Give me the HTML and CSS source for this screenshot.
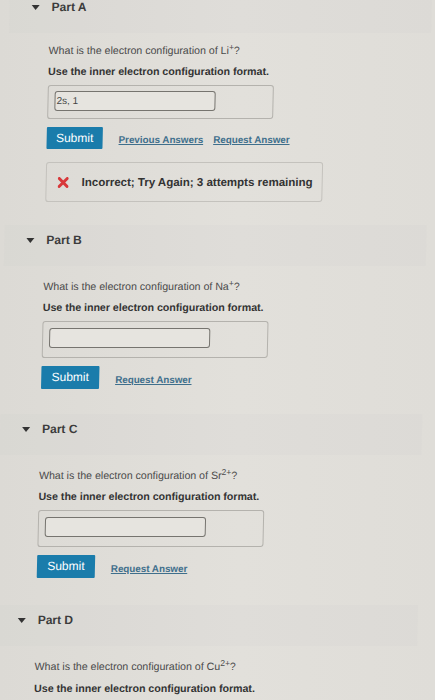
FILE: index.html
```html
<!DOCTYPE html>
<html>
<head>
<meta charset="utf-8">
<link rel="stylesheet" href="styles.css">
</head>
<body>
<div class="page">
  <section class="part part-a">
    <div class="part-head"><span class="caret"></span><span class="part-title">Part A</span></div>
    <div class="part-body">
      <p class="q">What is the electron configuration of Li<sup>+</sup>?</p>
      <p class="instr">Use the inner electron configuration format.</p>
      <div class="answer-box"><div class="input">2s, 1</div></div>
      <div class="actions">
        <span class="btn">Submit</span>
        <a class="link" href="#">Previous Answers</a>
        <a class="link" href="#">Request Answer</a>
      </div>
      <div class="feedback">
        <svg class="x" width="11" height="11" viewBox="0 0 11 11"><path d="M1.5 1.5 L9.5 9.5 M9.5 1.5 L1.5 9.5" stroke="#d8383a" stroke-width="3" stroke-linecap="round"/></svg>
        <span>Incorrect; Try Again; 3 attempts remaining</span>
      </div>
    </div>
  </section>
  <section class="part">
    <div class="part-head"><span class="caret"></span><span class="part-title">Part B</span></div>
    <div class="part-body">
      <p class="q">What is the electron configuration of Na<sup>+</sup>?</p>
      <p class="instr">Use the inner electron configuration format.</p>
      <div class="answer-box"><div class="input"></div></div>
      <div class="actions">
        <span class="btn">Submit</span>
        <a class="link" href="#">Request Answer</a>
      </div>
    </div>
  </section>
  <section class="part">
    <div class="part-head"><span class="caret"></span><span class="part-title">Part C</span></div>
    <div class="part-body">
      <p class="q">What is the electron configuration of Sr<sup>2+</sup>?</p>
      <p class="instr">Use the inner electron configuration format.</p>
      <div class="answer-box"><div class="input"></div></div>
      <div class="actions">
        <span class="btn">Submit</span>
        <a class="link" href="#">Request Answer</a>
      </div>
    </div>
  </section>
  <section class="part part-d">
    <div class="part-head"><span class="caret"></span><span class="part-title">Part D</span></div>
    <div class="part-body">
      <p class="q">What is the electron configuration of Cu<sup>2+</sup>?</p>
      <p class="instr">Use the inner electron configuration format.</p>
    </div>
  </section>
</div>
</body>
</html>
```
FILE: styles.css
```css
html, body {
  margin: 0;
  padding: 0;
  overflow: hidden;
}
body {
  font-family: "Liberation Sans", Arial, sans-serif;
  color: #3a3a3a;
  background: linear-gradient(90deg, #dcdad5 0%, #e2e0db 55%, #dfddd8 100%);
  height: 700px;
}
.page {
  transform: skewX(-1.3deg);
  transform-origin: 0 0;
  margin-top: -8px;
}
.part-head {
  height: 41px;
  margin: 0 3px 0 10px;
  background: rgba(196, 196, 196, 0.11);
  display: flex;
  align-items: flex-start;
  padding-top: 8px;
  box-sizing: border-box;
}
.caret {
  width: 0;
  height: 0;
  border-left: 4px solid transparent;
  border-right: 4px solid transparent;
  border-top: 5px solid #333;
  margin: 5px 0 0 22px;
}
.part-title {
  font-size: 12px;
  font-weight: bold;
  line-height: 14px;
  color: #3c3c3c;
  margin-left: 12px;
}
.part-body {
  padding: 13px 0 25px 50px;
}
.part-a .part-body {
  padding-top: 10px;
  padding-bottom: 23px;
}
.part-d {
  margin-top: 2px;
}
.part-d .instr {
  margin-top: 8px;
}
.q {
  margin: 0;
  font-size: 10.6px;
  line-height: 14px;
  color: #4a4a4a;
}
.q sup {
  font-size: 8.5px;
  line-height: 0;
  vertical-align: 4px;
}
.instr {
  margin: 7px 0 0;
  font-size: 10.6px;
  line-height: 14px;
  font-weight: bold;
  color: #333;
}
.answer-box {
  margin-top: 7px;
  width: 226px;
  height: 37px;
  box-sizing: border-box;
  border: 1px solid #b4b2ad;
  border-radius: 3px;
  padding: 6px 0 0 6px;
}
.part-a .answer-box {
  height: 34px;
  padding-top: 5px;
}
.input {
  width: 161px;
  height: 20px;
  box-sizing: border-box;
  border: 1px solid #76746f;
  border-radius: 3px;
  background: #e6e4df;
  font-size: 10px;
  line-height: 18px;
  padding-left: 1px;
  color: #444;
}
.actions {
  margin-top: 8px;
  display: flex;
  align-items: center;
  gap: 16px;
}
.btn {
  width: 58px;
  height: 23px;
  background: #1a7cab;
  color: #fff;
  font-size: 12px;
  line-height: 23px;
  text-align: center;
  border-radius: 1px;
}
.part-a .btn {
  width: 56px;
  height: 22px;
  line-height: 22px;
}
.actions .link + .link {
  margin-left: -6px;
}
.link {
  font-size: 9.8px;
  font-weight: bold;
  color: #3f6f8c;
  text-decoration: underline;
  margin-top: 3px;
}
.feedback {
  margin-top: 13px;
  width: 277px;
  height: 40px;
  box-sizing: border-box;
  border: 1px solid #c4c2bd;
  border-radius: 3px;
  display: flex;
  align-items: center;
  padding-left: 11px;
  font-size: 11.5px;
  font-weight: bold;
  color: #333;
}
.x {
  margin-right: 13px;
}
```
